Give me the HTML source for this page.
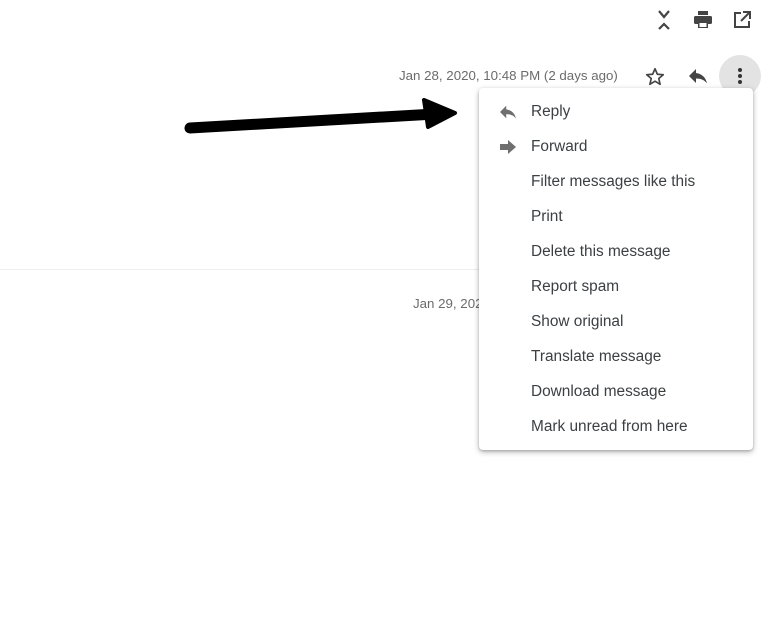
<!DOCTYPE html>
<html><head><meta charset="utf-8"><style>
body{margin:0;width:768px;height:619px;background:#fff;position:relative;overflow:hidden;font-family:"Liberation Sans",Arial,sans-serif;}
.abs{position:absolute;}
.date{color:#6b6b6b;font-size:13.3px;}
.menu{left:479px;top:88px;width:274px;height:362px;background:#fff;border-radius:4px;box-shadow:0 2px 6px rgba(0,0,0,.3),0 1px 2px rgba(0,0,0,.15);}
.item{position:absolute;left:52px;font-size:15.4px;color:#3c4043;}
</style></head><body>
<svg class="abs" style="left:654px;top:9px" width="20" height="22" viewBox="0 0 20 22"><path d="M5 2l5 6 5-6M5 20l5-5 5 5" stroke="#444" stroke-width="2.2" fill="none"/></svg>
<svg class="abs" style="left:693px;top:11px" width="20" height="18" viewBox="0 0 20 18"><rect x="5" y="0" width="10" height="4" fill="#444"/><rect x="1" y="5" width="18" height="8" rx="1.5" fill="#444"/><rect x="5" y="11" width="10" height="6" fill="#444"/><rect x="6.5" y="12" width="7" height="4" fill="#fff"/></svg>
<svg class="abs" style="left:733px;top:11px" width="18" height="18" viewBox="0 0 18 18"><path d="M8 2H2v14h14v-6" stroke="#444" stroke-width="2" fill="none"/><path d="M10 1h7v7M17 1L8 10" stroke="#444" stroke-width="2" fill="none"/></svg>
<div class="abs date" style="left:399px;top:68px">Jan 28, 2020, 10:48 PM (2 days ago)</div>
<svg class="abs" style="left:644px;top:66px" width="22" height="22" viewBox="0 0 24 24"><path d="M12 3l2.6 6 6.4.5-4.9 4.2 1.5 6.3L12 16.6 6.4 20l1.5-6.3L3 9.5 9.4 9z" stroke="#444" stroke-width="1.8" fill="none" stroke-linejoin="round"/></svg>
<svg class="abs" style="left:687px;top:67px" width="22" height="18" viewBox="0 0 22 18"><path d="M9 2L2 9l7 7v-4.5c5 0 8.5 1.5 11 5-1-5-4-9.5-11-10.5z" fill="#444"/></svg>
<div class="abs" style="left:719px;top:55px;width:42px;height:42px;border-radius:50%;background:#e3e3e3"></div>
<svg class="abs" style="left:737px;top:67px" width="6" height="18" viewBox="0 0 6 18"><circle cx="3" cy="3" r="2" fill="#333"/><circle cx="3" cy="9" r="2" fill="#333"/><circle cx="3" cy="15" r="2" fill="#333"/></svg>
<svg class="abs" style="left:0;top:0" width="480" height="160"><path d="M190 128L435 114" stroke="#000" stroke-width="11" stroke-linecap="round"/><path d="M424 100L455 113L428 127z" fill="#000" stroke="#000" stroke-width="4" stroke-linejoin="round"/></svg>
<div class="abs" style="left:0;top:269px;width:480px;height:1px;background:#eeeeee"></div>
<div class="abs date" style="left:413px;top:296px">Jan 29, 2020</div>
<div class="abs menu">
<svg class="abs" style="left:19px;top:16px" width="20" height="16" viewBox="0 0 22 18"><path d="M9 2L2 9l7 7v-4.5c5 0 8.5 1.5 11 5-1-5-4-9.5-11-10.5z" fill="#6f6f6f"/></svg>
<svg class="abs" style="left:20px;top:51px" width="18" height="16" viewBox="0 0 18 16"><path d="M1 5h8V1l8 7-8 7v-4H1z" fill="#6f6f6f"/></svg>
<div class="item" style="top:15px">Reply</div>
<div class="item" style="top:50px">Forward</div>
<div class="item" style="top:85px">Filter messages like this</div>
<div class="item" style="top:120px">Print</div>
<div class="item" style="top:155px">Delete this message</div>
<div class="item" style="top:190px">Report spam</div>
<div class="item" style="top:225px">Show original</div>
<div class="item" style="top:260px">Translate message</div>
<div class="item" style="top:295px">Download message</div>
<div class="item" style="top:330px">Mark unread from here</div>
</div>
</body></html>
